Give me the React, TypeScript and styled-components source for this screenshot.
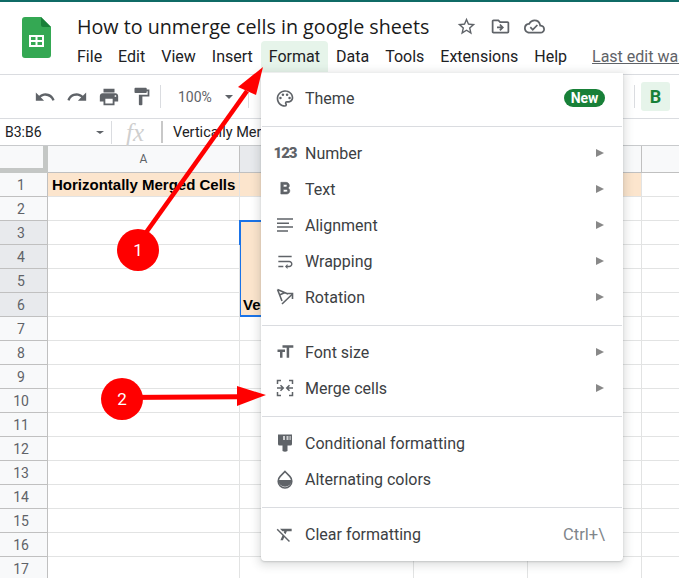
import React from 'react';
import styled, { createGlobalStyle } from 'styled-components';
import {
  MdUndo,
  MdRedo,
  MdPrint,
  MdFormatPaint,
  MdStarBorder,
  MdOutlineDriveFileMove,
  MdOutlineCloudDone,
  MdOutlinePalette,
  MdWrapText,
  MdFormatSize,
  MdFormatClear,
} from 'react-icons/md';

const GlobalStyle = createGlobalStyle`
  html, body {
    margin: 0;
    padding: 0;
    background: #fff;
    overflow: hidden;
  }
  * {
    box-sizing: border-box;
  }
`;

const MENU_BAR = ['File', 'Edit', 'View', 'Insert', 'Format', 'Data', 'Tools', 'Extensions', 'Help'];
const COLUMNS = ['A', 'B', 'C', 'D', 'E'];
const ROWS = Array.from({ length: 17 }, (_, i) => i + 1);

const BoldIcon = () => (
  <svg width="24" height="24" viewBox="0 0 24 24" fill="currentColor" stroke="currentColor" strokeWidth="0.7">
    <path d="M15.6 10.79c.97-.67 1.65-1.77 1.65-2.79 0-2.26-1.75-4-4-4H7v14h7.04c2.09 0 3.71-1.7 3.71-3.79 0-1.52-.86-2.82-2.15-3.42zM10 6.5h3c.83 0 1.5.67 1.5 1.5s-.67 1.5-1.5 1.5h-3v-3zm3.5 9H10v-3h3.5c.83 0 1.5.67 1.5 1.5s-.67 1.5-1.5 1.5z" />
  </svg>
);

const AlignLeft = () => (
  <svg width="20" height="20" viewBox="0 0 20 20" fill="none" stroke="currentColor" strokeWidth="1.4">
    <path d="M2 4 H18 M2 8.2 H14 M2 12 H18 M2 16 H13" />
  </svg>
);

const Rotation = () => (
  <svg width="20" height="20" viewBox="0 0 20 20" fill="none" stroke="currentColor" strokeWidth="1.6">
    <path d="M2.5 2.5 L13 7 M2.5 2.5 L7 14 M4.5 8 L10 5.5" />
    <path d="M7 17 L17.5 7" />
    <path d="M12.5 6.5 L17.5 6.5 L17.5 12" />
  </svg>
);

const MergeCells = () => (
  <svg width="18" height="18" viewBox="0 0 18 18" fill="none" stroke="currentColor" strokeWidth="1.5">
    <path d="M5 1.5 H1.5 V5 M13 1.5 H16.5 V5 M5 16.5 H1.5 V13 M13 16.5 H16.5 V13" />
    <path d="M1 9 H7 M4.5 6.2 L7.3 9 L4.5 11.8 M17 9 H11 M13.5 6.2 L10.7 9 L13.5 11.8" />
  </svg>
);

const CondFormat = () => (
  <svg width="20" height="20" viewBox="0 0 20 20">
    <path fill="currentColor" d="M3 1.5 H17 V11 Q17 12.5 15.5 12.5 H12.5 V18 Q10 19.5 7.5 18 V12.5 H4.5 Q3 12.5 3 11 Z" />
    <path fill="#fff" opacity="0.7" d="M8 3 H10 V7 H8 Z M11.5 3 H13.5 V7 H11.5 Z M14.5 3 H15.7 V7 H14.5 Z" />
  </svg>
);

const Alternating = () => (
  <svg width="20" height="20" viewBox="0 0 20 20">
    <path fill="none" stroke="currentColor" strokeWidth="1.6" d="M10 2.5 L14.8 7.4 A6.8 6.8 0 1 1 5.2 7.4 Z" />
    <path fill="currentColor" d="M3.2 11 H16.8 A6.8 6.8 0 0 1 3.2 11 Z" />
  </svg>
);

const App: React.FC = () => {
  return (
    <>
      <GlobalStyle />
      <Page>
        <TopLine />
        <Header>
          <Logo>
            <svg width="29" height="41" viewBox="0 0 29 41">
              <path fill="#34a853" d="M3 0 H19 L29 10 V38 Q29 41 26 41 H3 Q0 41 0 38 V3 Q0 0 3 0 Z" />
              <path fill="#188038" d="M19 0 L29 10 H21 Q19 10 19 8 Z" />
              <path
                fill="#fff"
                d="M7 18 H22 V30 H7 Z M9 20 V23 H13.5 V20 Z M15.5 20 V23 H20 V20 Z M9 25 V28 H13.5 V25 Z M15.5 25 V28 H20 V25 Z"
                fillRule="evenodd"
              />
            </svg>
          </Logo>
          <HeaderBody>
            <TitleRow>
              <Title>How to unmerge cells in google sheets</Title>
              <TitleIcons>
                <MdStarBorder size={21} />
                <MdOutlineDriveFileMove size={21} />
                <MdOutlineCloudDone size={21} />
              </TitleIcons>
            </TitleRow>
            <MenuBar>
              {MENU_BAR.map((item) => (
                <MenuBarItem key={item} $active={item === 'Format'}>
                  {item}
                </MenuBarItem>
              ))}
              <LastEdit>Last edit was seconds ago</LastEdit>
            </MenuBar>
          </HeaderBody>
        </Header>

        <Toolbar>
          <ToolIcon>
            <MdUndo size={22} />
          </ToolIcon>
          <ToolIcon>
            <MdRedo size={22} />
          </ToolIcon>
          <ToolIcon>
            <MdPrint size={22} />
          </ToolIcon>
          <ToolIcon>
            <MdFormatPaint size={21} />
          </ToolIcon>
          <ToolSep />
          <Zoom>100%</Zoom>
          <Caret />
          <ToolSep />
          <ToolRight>
            <Caret />
            <ToolSep />
            <BoldButton>B</BoldButton>
          </ToolRight>
        </Toolbar>

        <FormulaBar>
          <NameBox>
            B3:B6
            <Caret />
          </NameBox>
          <FxSep />
          <Fx>fx</Fx>
          <FxBar />
          <FormulaText>Vertically Merged Cells</FormulaText>
        </FormulaBar>

        <Sheet>
          <Corner />
          {COLUMNS.map((c) => (
            <ColHead key={c} $selected={c === 'B'}>
              {c === 'A' ? c : null}
            </ColHead>
          ))}
          {ROWS.map((r) => (
            <React.Fragment key={r}>
              <RowHead $selected={r >= 3 && r <= 6}>{r}</RowHead>
              {COLUMNS.map((c) => {
                if (c === 'B' && r === 3) {
                  return (
                    <MergedCell key={c}>
                      <span>Vertically Merged Cells</span>
                    </MergedCell>
                  );
                }
                if (c === 'B' && r > 3 && r <= 6) return null;
                const peach = r === 1 && c !== 'E';
                return (
                  <Cell key={c} $peach={peach}>
                    {r === 1 && c === 'A' ? 'Horizontally Merged Cells' : null}
                  </Cell>
                );
              })}
            </React.Fragment>
          ))}
        </Sheet>

        <Dropdown>
          <Item>
            <ItemIcon>
              <MdOutlinePalette size={21} />
            </ItemIcon>
            Theme
            <NewBadge>New</NewBadge>
          </Item>
          <Divider />
          <Item>
            <ItemIcon>
              <NumberGlyph>123</NumberGlyph>
            </ItemIcon>
            Number
            <SubArrow />
          </Item>
          <Item>
            <ItemIcon>
              <BoldIcon />
            </ItemIcon>
            Text
            <SubArrow />
          </Item>
          <Item>
            <ItemIcon>
              <AlignLeft />
            </ItemIcon>
            Alignment
            <SubArrow />
          </Item>
          <Item>
            <ItemIcon>
              <MdWrapText size={21} />
            </ItemIcon>
            Wrapping
            <SubArrow />
          </Item>
          <Item>
            <ItemIcon>
              <Rotation />
            </ItemIcon>
            Rotation
            <SubArrow />
          </Item>
          <Divider />
          <Item>
            <ItemIcon>
              <MdFormatSize size={22} />
            </ItemIcon>
            Font size
            <SubArrow />
          </Item>
          <Item>
            <ItemIcon>
              <MergeCells />
            </ItemIcon>
            Merge cells
            <SubArrow />
          </Item>
          <Divider />
          <Item>
            <ItemIcon>
              <CondFormat />
            </ItemIcon>
            Conditional formatting
          </Item>
          <Item>
            <ItemIcon>
              <Alternating />
            </ItemIcon>
            Alternating colors
          </Item>
          <Divider />
          <Item>
            <ItemIcon>
              <MdFormatClear size={21} />
            </ItemIcon>
            Clear formatting
            <Shortcut>Ctrl+\</Shortcut>
          </Item>
        </Dropdown>

        <Annotations width="679" height="578" viewBox="0 0 679 578">
          <path d="M135 248 L247 91" stroke="#ff0000" strokeWidth="4.6" fill="none" />
          <path d="M263 67 L238 87 L256 95 Z" fill="#ff0000" />
          <path d="M122 397.5 L240 396.7" stroke="#ff0000" strokeWidth="5" fill="none" />
          <path d="M266 395 L237 386 L237 406 Z" fill="#ff0000" />
        </Annotations>
        <NumberBadge $x={138} $y={250}>1</NumberBadge>
        <NumberBadge $x={122} $y={399}>2</NumberBadge>
      </Page>
    </>
  );
};

const Page = styled.div`
  position: relative;
  width: 679px;
  height: 578px;
  overflow: hidden;
  font-family: Roboto, 'Liberation Sans', sans-serif;
  color: #3c4043;
`;

const TopLine = styled.div`
  height: 2px;
  background: #0f6b66;
`;

const Header = styled.header`
  display: flex;
  height: 73px;
  border-bottom: 1px solid #dadce0;
`;

const Logo = styled.div`
  width: 69px;
  padding: 15px 0 0 22px;
  flex: none;
`;

const HeaderBody = styled.div`
  flex: 1;
  min-width: 0;
`;

const TitleRow = styled.div`
  display: flex;
  align-items: center;
  height: 29px;
  margin-top: 10px;
  padding-left: 8px;
`;

const Title = styled.div`
  font-family: 'Open Sans', sans-serif;
  font-size: 19.7px;
  color: #1a1a1a;
  white-space: nowrap;
`;

const TitleIcons = styled.div`
  display: flex;
  align-items: center;
  gap: 13px;
  margin-left: 27px;
  color: #5f6368;
`;

const MenuBar = styled.nav`
  display: flex;
  align-items: center;
  height: 31px;
  white-space: nowrap;
  overflow: hidden;
`;

const MenuBarItem = styled.div<{ $active?: boolean }>`
  height: 31px;
  line-height: 31px;
  padding: 0 8px;
  font-size: 16px;
  color: #202124;
  border-radius: 4px 4px 0 0;
  background: ${(p) => (p.$active ? '#e6f4ea' : 'transparent')};
`;

const LastEdit = styled.div`
  margin-left: 17px;
  font-size: 16px;
  color: #5f6368;
  text-decoration: underline;
`;

const Toolbar = styled.div`
  display: flex;
  align-items: center;
  height: 44px;
  padding: 0 9px 0 29px;
  border-bottom: 1px solid #dadce0;
`;

const ToolIcon = styled.div`
  width: 32px;
  display: flex;
  justify-content: center;
  color: #5f6368;
`;

const ToolSep = styled.div`
  width: 1px;
  height: 23px;
  margin: 0 0 0 3px;
  background: #dadce0;
`;

const Zoom = styled.div`
  margin: 0 13px 0 17px;
  font-size: 14px;
  color: #5f6368;
`;

const Caret = styled.span`
  display: inline-block;
  width: 0;
  height: 0;
  margin-right: 12px;
  border-left: 4px solid transparent;
  border-right: 4px solid transparent;
  border-top: 4px solid #5f6368;
`;

const ToolRight = styled.div`
  display: flex;
  align-items: center;
  margin-left: auto;

  ${ToolSep} {
    margin: 0 6px 0 0;
  }
`;

const BoldButton = styled.div`
  width: 29px;
  height: 29px;
  border-radius: 3px;
  background: #e6f4ea;
  color: #188038;
  font-weight: 700;
  font-size: 18px;
  line-height: 29px;
  text-align: center;
`;

const FormulaBar = styled.div`
  display: flex;
  align-items: center;
  height: 27px;
  border-bottom: 1px solid #c8cacc;
`;

const NameBox = styled.div`
  display: flex;
  align-items: center;
  justify-content: space-between;
  width: 111px;
  padding-left: 5px;
  font-size: 14px;
  color: #202124;

  ${Caret} {
    margin-right: 7px;
    border-width: 3px 4px 0;
  }
`;

const FxSep = styled.div`
  width: 1px;
  height: 23px;
  background: #dadce0;
`;

const Fx = styled.div`
  width: 49px;
  padding-left: 14px;
  font-family: 'Liberation Serif', serif;
  font-style: italic;
  font-size: 25px;
  line-height: 1;
  color: #cfcfcf;
`;

const FxBar = styled.div`
  width: 2px;
  height: 22px;
  background: #c8c8c8;
`;

const FormulaText = styled.div`
  margin-left: 10px;
  font-size: 14.5px;
  color: #202124;
  white-space: nowrap;
`;

const Sheet = styled.div`
  display: grid;
  grid-template-columns: 48px 192px 174px 114px 114px 114px;
  grid-template-rows: 27px repeat(17, 24px);
`;

const Corner = styled.div`
  background: #f8f9fa;
  border-right: 5px solid #c4c7c5;
  border-bottom: 5px solid #c4c7c5;
`;

const ColHead = styled.div<{ $selected?: boolean }>`
  display: flex;
  align-items: center;
  justify-content: center;
  font-size: 12px;
  color: #5f6368;
  background: ${(p) => (p.$selected ? '#e8eaed' : '#f8f9fa')};
  border-right: 1px solid #c0c0c0;
  border-bottom: 1px solid #c0c0c0;
`;

const RowHead = styled.div<{ $selected?: boolean }>`
  display: flex;
  align-items: center;
  justify-content: center;
  padding-right: 5px;
  font-size: 14px;
  color: #5f6368;
  background: ${(p) => (p.$selected ? '#e8eaed' : '#f8f9fa')};
  border-right: 1px solid #c0c0c0;
  border-bottom: 1px solid #c0c0c0;
`;

const Cell = styled.div<{ $peach?: boolean }>`
  padding-left: 4px;
  font-family: 'Liberation Sans', sans-serif;
  font-weight: 700;
  font-size: 15px;
  line-height: 24px;
  color: #000;
  white-space: nowrap;
  background: ${(p) => (p.$peach ? '#fce5cd' : '#fff')};
  border-right: 1px solid #e2e3e3;
  border-bottom: 1px solid #e2e3e3;
`;

const MergedCell = styled.div`
  grid-row: span 4;
  display: flex;
  align-items: flex-end;
  margin: -1px 0 0 -1px;
  padding: 0 0 0 2px;
  font-family: 'Liberation Sans', sans-serif;
  font-weight: 700;
  font-size: 15px;
  line-height: 21px;
  color: #000;
  white-space: nowrap;
  background: #fce5cd;
  border: 2px solid #1a73e8;
`;

const Dropdown = styled.div`
  position: absolute;
  left: 261px;
  top: 73px;
  width: 362px;
  height: 488px;
  padding-top: 7px;
  background: #fff;
  border-radius: 0 0 4px 4px;
  box-shadow: 0 2px 8px 3px rgba(60, 64, 67, 0.15), 0 1px 2px rgba(60, 64, 67, 0.2);
`;

const Item = styled.div`
  display: flex;
  align-items: center;
  height: 36px;
  padding: 0 18px 0 14px;
  font-size: 16px;
  color: #3c4043;
`;

const ItemIcon = styled.span`
  display: flex;
  align-items: center;
  justify-content: center;
  width: 20px;
  height: 24px;
  margin-right: 10px;
  color: #5f6368;
`;

const NumberGlyph = styled.span`
  font-size: 15px;
  font-weight: 900;
  letter-spacing: -1.1px;
`;

const Divider = styled.div`
  height: 1px;
  margin: 10px 1px 8px 1px;
  background: #dadce0;
`;

const SubArrow = styled.span`
  margin-left: auto;
  margin-right: 1px;
  width: 0;
  height: 0;
  border-top: 4px solid transparent;
  border-bottom: 4px solid transparent;
  border-left: 8px solid #888;
`;

const NewBadge = styled.span`
  margin-left: auto;
  width: 41px;
  height: 18px;
  border-radius: 9px;
  background: #188038;
  color: #fff;
  font-size: 14px;
  font-weight: 700;
  line-height: 18px;
  text-align: center;
`;

const Shortcut = styled.span`
  margin-left: auto;
  font-size: 16.5px;
  color: #80868b;
`;

const Annotations = styled.svg`
  position: absolute;
  left: 0;
  top: 0;
  pointer-events: none;
`;

const NumberBadge = styled.div<{ $x: number; $y: number }>`
  position: absolute;
  left: ${(p) => p.$x - 21}px;
  top: ${(p) => p.$y - 21}px;
  width: 42px;
  height: 42px;
  border-radius: 50%;
  background: #ff0000;
  color: #fff;
  font-family: Roboto, sans-serif;
  font-size: 17px;
  line-height: 42px;
  text-align: center;
`;

export default App;
